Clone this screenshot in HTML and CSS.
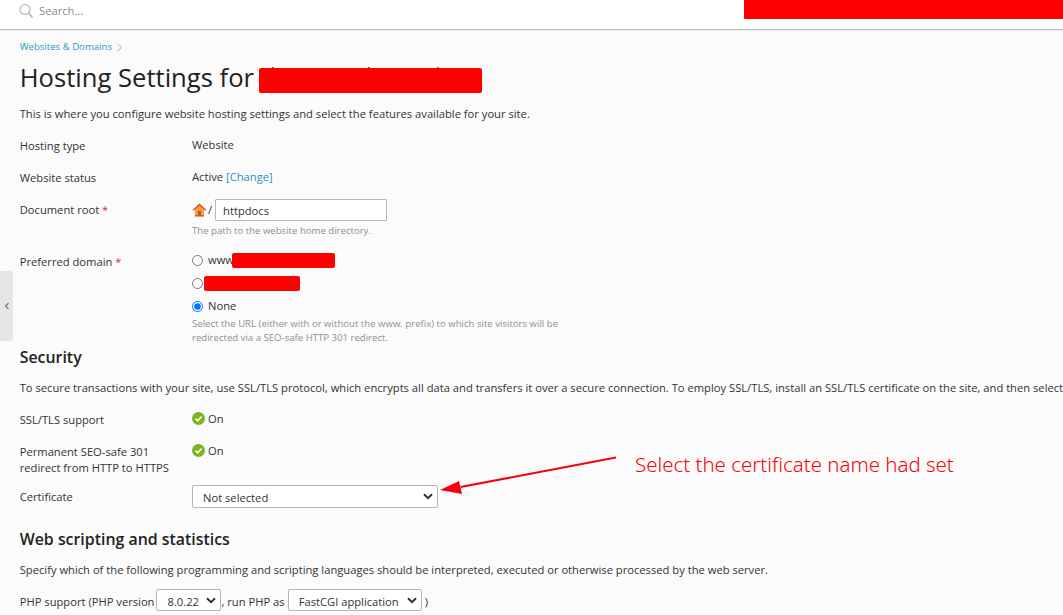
FILE: index.html
```html
<!DOCTYPE html>
<html lang="en">
<head>
<meta charset="utf-8">
<title>Hosting Settings</title>
<link rel="stylesheet" href="styles.css">
</head>
<body>
<header class="topbar">
  <div class="search">
    <svg class="search-icon" width="16" height="16" viewBox="0 0 16 16" aria-hidden="true"><circle cx="7" cy="6.5" r="5" fill="none" stroke="#aab0b0" stroke-width="1.1"/><path d="M10.6 10.2 14.5 14.5" stroke="#aab0b0" stroke-width="1.6" fill="none"/></svg>
    <span class="search-text">Search...</span>
  </div>
  <div class="redact top-redact"></div>
</header>

<button class="side-handle" aria-label="Collapse"><svg width="6" height="8" viewBox="0 0 6 8" aria-hidden="true"><path d="M4.5 1 1.5 4l3 3" fill="none" stroke="#777" stroke-width="1.2"/></svg></button>

<main class="content">
  <nav class="crumbs"><a href="#">Websites &amp; Domains</a><svg width="7" height="9" viewBox="0 0 7 9" aria-hidden="true"><path d="M1.5 .8 5.3 4.5 1.5 8.2" fill="none" stroke="#9a9a9a" stroke-width=".9"/></svg></nav>
  <h1 class="title">Hosting Settings for <span class="redact title-redact"><i class="tick t1"></i><i class="tick t2"></i><i class="tick t3"></i></span></h1>
  <p class="intro">This is where you configure website hosting settings and select the features available for your site.</p>

  <div class="row row-type"><div class="label">Hosting type</div><div class="value">Website</div></div>
  <div class="row row-status"><div class="label">Website status</div><div class="value">Active <a href="#">[Change]</a></div></div>
  <div class="row row-root">
    <div class="label">Document root <span class="req">*</span></div>
    <div class="value">
      <div class="root-line">
        <svg width="15" height="14" viewBox="0 0 15 14" aria-hidden="true"><path d="M7.5 1 1 7h2v6h9V7h2z" fill="#f2a23c"/><path d="M7.5.6.6 7l1 .8 5.9-5.4 5.9 5.4 1-.8z" fill="#e0522a"/><rect x="3" y="12" width="9" height="1.6" fill="#e0641f"/><rect x="6" y="8" width="3" height="5" fill="#c9541d"/></svg>
        <span class="slash">/</span>
        <input class="root-input" type="text" value="httpdocs">
      </div>
      <div class="hint hint-root">The path to the website home directory.</div>
    </div>
  </div>
  <div class="row row-pref">
    <div class="label label-pref">Preferred domain <span class="req">*</span></div>
    <div class="value">
      <label class="radio r1"><input type="radio" name="d"><span class="www">www</span><span class="redact pref-a"></span></label>
      <label class="radio r2"><input type="radio" name="d"><span class="redact pref-b"></span></label>
      <label class="radio r3"><input type="radio" name="d" checked><span class="none">None</span></label>
      <div class="hint hint-pref">Select the URL (either with or without the www. prefix) to which site visitors will be<br>redirected via a SEO-safe HTTP 301 redirect.</div>
    </div>
  </div>

  <h2 class="sec sec-security">Security</h2>
  <p class="desc desc-security">To secure transactions with your site, use SSL/TLS protocol, which encrypts all data and transfers it over a secure connection. To employ SSL/TLS, install an SSL/TLS certificate on the site, and then select</p>
  <div class="row row-ssl"><div class="label">SSL/TLS support</div><div class="value on"><svg class="ok" width="13" height="13" viewBox="0 0 13 13" aria-hidden="true"><circle cx="6.5" cy="6.5" r="6.5" fill="#7ab51d"/><path d="M3.4 6.6 5.6 8.8 9.6 4.6" fill="none" stroke="#fff" stroke-width="1.6"/></svg>On</div></div>
  <div class="row row-301"><div class="label">Permanent SEO-safe 301<br>redirect from HTTP to HTTPS</div><div class="value on"><svg class="ok" width="13" height="13" viewBox="0 0 13 13" aria-hidden="true"><circle cx="6.5" cy="6.5" r="6.5" fill="#7ab51d"/><path d="M3.4 6.6 5.6 8.8 9.6 4.6" fill="none" stroke="#fff" stroke-width="1.6"/></svg>On</div></div>
  <div class="row row-cert"><div class="label">Certificate</div><div class="value"><select class="sel cert"><option>Not selected</option></select></div></div>

  <h2 class="sec sec-web">Web scripting and statistics</h2>
  <p class="desc desc-web">Specify which of the following programming and scripting languages should be interpreted, executed or otherwise processed by the web server.</p>
  <div class="php"><span>PHP support (PHP version</span><select class="sel php-v"><option>8.0.22</option></select><span>, run PHP as</span><select class="sel php-m"><option>FastCGI application</option></select><span>)</span></div>
</main>

<div class="note">Select the certificate name had set</div>
<svg class="arrow" width="190" height="50" viewBox="0 0 190 50" aria-hidden="true"><path d="M178 2.5 22.5 32" stroke="#f5000f" stroke-width="2" fill="none"/><path d="M2 35 21 26 24 39z" fill="#f5000f"/></svg>
</body>
</html>
```

FILE: styles.css
```css
html, body { margin: 0; padding: 0; height: 615px; overflow: hidden; }
body { position: relative; background: #fbfbfb; color: #333; font: 11.2px/16px "Open Sans", "Noto Sans", sans-serif; }
a { color: #2a93bd; text-decoration: none; }
.redact { background: #fe0000; border-radius: 2px; }
.topbar { height: 29px; background: #fff; box-shadow: 0 1px 1px rgba(0,0,0,.25); display: flex; justify-content: space-between; align-items: flex-start; }
.search { display: flex; align-items: center; padding: 3px 0 0 18px; color: #8a8a8a; }
.search-text { margin-left: 5px; }
.search-icon { display: block; }
.top-redact { width: 319px; height: 19px; border-radius: 0 0 0 1px; }
.side-handle { position: absolute; left: 0; top: 271px; width: 13px; height: 70px; padding: 0; border: 0; background: #e6e6e6; border-radius: 0 3px 3px 0; display: flex; align-items: center; justify-content: center; }
.content { padding: 10px 0 0 19.7px; white-space: nowrap; }
.crumbs { display: flex; align-items: center; gap: 4px; height: 16px; font-size: 9.6px; }
.crumbs a { color: #2c98c9; }
.title { margin: 6px 0 0; font-size: 25.6px; line-height: 34px; font-weight: 400; color: #222; display: flex; align-items: center; }
.title-redact { position: relative; align-self: flex-start; width: 223px; height: 25px; margin-left: 5px; margin-top: 7px; }
.tick { position: absolute; top: -1px; width: 2px; height: 1px; background: #3a6c94; }
.t1 { left: 13px; }
.t2 { left: 109px; }
.t3 { left: 178px; }
.intro { margin: 11px 0 0; }
.row { display: grid; grid-template-columns: 172.3px 1fr; }
.label { color: #333; }
.value { color: #333; }
.req { color: #e0245e; }
.row-type { margin-top: 16px; height: 32px; }
.row-type .value, .row-status .value { margin-top: -1px; }
.row-status { height: 32px; }
.row-root { height: 50px; }
.root-line { display: flex; align-items: center; height: 22px; margin-top: -3px; }
.slash { margin: 0 3px 0 1px; }
.root-input { box-sizing: border-box; width: 172px; height: 22px; padding: 0 7px; border: 1px solid #b5b5b5; border-radius: 1px; background: #fff; font: 11.2px "Open Sans", sans-serif; color: #333; }
.hint { font-size: 9.6px; color: #8f8f8f; }
.hint-root { line-height: 14px; margin-top: 3px; }
.row-pref { height: 94px; }
.label-pref { margin-top: 2px; }
.radio { display: flex; align-items: center; height: 16px; }
.radio input { margin: 0; width: 11px; height: 11px; flex: none; }
.r2 { margin-top: 7px; }
.r3 { margin-top: 7px; }
.www { margin-left: 5px; }
.none { margin-left: 5px; }
.pref-a { width: 103px; height: 15px; margin-left: -2px; }
.pref-b { width: 96px; height: 15px; margin-left: 1px; }
.hint-pref { line-height: 14px; margin-top: 3px; }
.sec { margin: 0; font-size: 15.9px; line-height: 22px; font-weight: 600; color: #222; }
.sec-security { margin-top: 0; }
.desc { margin: 0; }
.desc-security { margin-top: 12px; }
.row-ssl { margin-top: 16px; height: 32px; }
.row-301 { height: 45px; }
.on { display: flex; align-items: flex-start; gap: 3px; margin-top: -1px; }
.ok { margin-top: 1px; }
.row-cert { height: 22px; }
.sel { box-sizing: border-box; appearance: none; height: 22px; border: 1px solid #b5b5b5; border-radius: 2px; background: #fff url("data:image/svg+xml,%3Csvg xmlns='http://www.w3.org/2000/svg' width='10' height='7' viewBox='0 0 10 7'%3E%3Cpath d='M1 1.2 5 5.2 9 1.2' fill='none' stroke='%23333' stroke-width='2'/%3E%3C/svg%3E") no-repeat right 4px center; color: #333; font: 11.2px "Open Sans", sans-serif; padding: 2px 18px 0 10px; }
.cert { width: 246px; display: block; margin-top: -4px; height: 23px; }
.sec-web { margin-top: 17px; }
.desc-web { margin-top: 12px; }
.php { margin-top: 15px; display: flex; align-items: center; }
.php-v { width: 65px; margin: -4px 0 0 2px; }
.php-m { width: 134px; margin: -4px 3px 0 3px; }
.note { position: absolute; left: 635px; top: 451px; font: 300 20.45px/26px "Noto Sans", sans-serif; color: #f5000a; white-space: nowrap; }
.arrow { position: absolute; left: 438px; top: 455px; }
```
